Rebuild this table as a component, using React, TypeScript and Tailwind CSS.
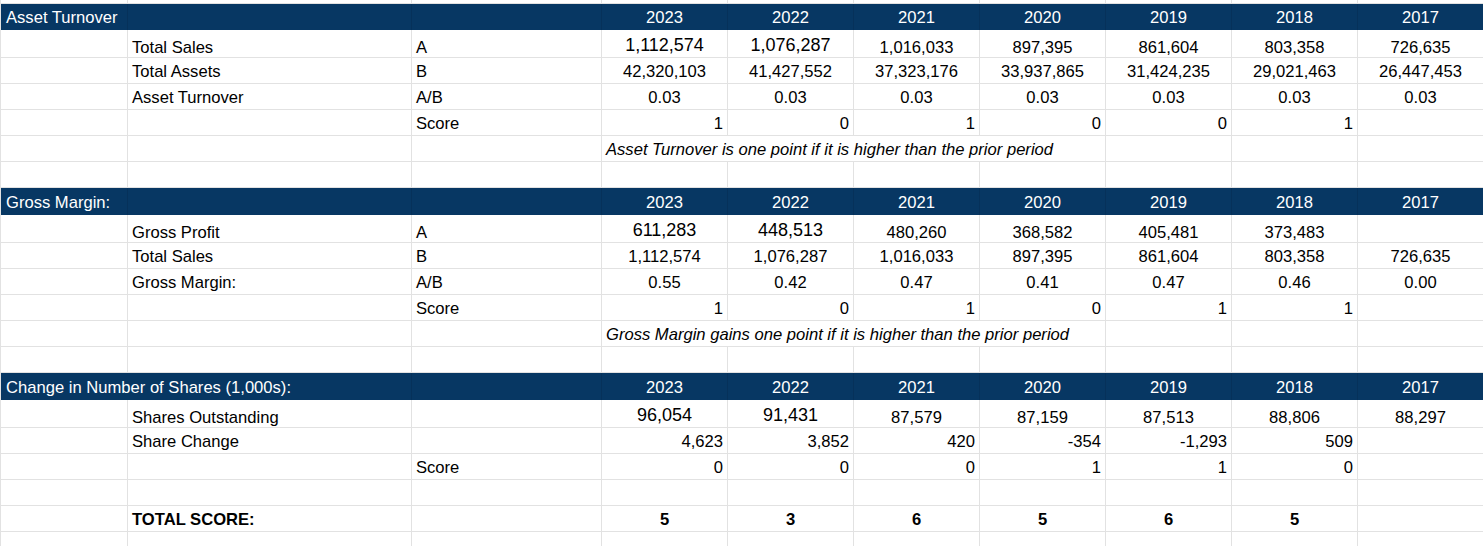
import React from 'react';

type Align = 'left' | 'center' | 'right';

interface Cell {
  text?: string;
  span?: number;
  align?: Align;
  big?: boolean;
  italic?: boolean;
  bold?: boolean;
}

const YEARS = ['2023', '2022', '2021', '2020', '2019', '2018', '2017'];

const GRID = 'grid grid-cols-[127px_284px_190px_repeat(7,126px)]';

const alignClass: Record<Align, string> = {
  left: 'justify-start',
  center: 'justify-center',
  right: 'justify-end',
};

const SpanClass: Record<number, string> = {
  1: 'col-span-1',
  2: 'col-span-2',
  3: 'col-span-3',
  4: 'col-span-4',
};

// header band with navy fill
const HeaderRow: React.FC<{ label: string; span?: number; h: string }> = ({ label, span = 1, h }) => {
  const blanks = 3 - span;
  return (
    <div className={`${GRID} ${h} bg-[#073763] text-white`}>
      <div className={`${SpanClass[span]} flex items-center pt-[2px] pl-[5px] pr-[4px] border-r border-[#06315a] whitespace-nowrap`}>
        {label}
      </div>
      {Array.from({ length: blanks }).map((_, i) => (
        <div key={i} className="border-r border-[#06315a]" />
      ))}
      {YEARS.map((y) => (
        <div key={y} className="flex items-center justify-center pt-[2px] border-r border-[#06315a]">
          {y}
        </div>
      ))}
    </div>
  );
};

// plain grid row; first = the taller row right after a header
const Row: React.FC<{ cells: Cell[]; h?: string; first?: boolean }> = ({ cells, h = 'h-[26px]', first }) => {
  const filled: Cell[] = [...cells];
  let used = filled.reduce((n, c) => n + (c.span ?? 1), 0);
  while (used < 10) {
    filled.push({});
    used++;
  }
  return (
    <div className={`${GRID} ${h} border-b border-[#e2e2e2]`}>
      {filled.map((c, i) => {
        const vert = first
          ? c.big
            ? 'items-center pt-[3px]'
            : 'items-end pb-0'
          : 'items-center pt-[3px]';
        return (
          <div
            key={i}
            className={`${SpanClass[c.span ?? 1]} flex ${vert} ${alignClass[c.align ?? 'left']} px-[4px] border-r border-[#e2e2e2] whitespace-nowrap ${
              c.big ? 'text-[18px] leading-[20px]' : ''
            } ${c.italic ? 'italic' : ''} ${c.bold ? 'font-bold' : ''}`}
          >
            {c.text}
          </div>
        );
      })}
    </div>
  );
};

const centered = (vals: string[], bigCount = 0): Cell[] =>
  vals.map((v, i) => ({ text: v, align: 'center', big: i < bigCount }));

const right = (vals: string[]): Cell[] => vals.map((v) => ({ text: v, align: 'right' }));

export default function App() {
  return (
    <div className="w-[1483px] h-[546px] overflow-hidden bg-white text-black text-[16.6px] leading-[18px] font-[Liberation_Sans,Arial,sans-serif]">
      <div className="border-l border-[#e2e2e2]">
        <Row cells={[]} h="h-[4px]" />

        {/* Asset turnover */}
        <HeaderRow label="Asset Turnover" h="h-[26px]" />
        <Row
          first
          h="h-[28px]"
          cells={[
            {},
            { text: 'Total Sales' },
            { text: 'A' },
            ...centered(['1,112,574', '1,076,287', '1,016,033', '897,395', '861,604', '803,358', '726,635'], 2),
          ]}
        />
        <Row
          cells={[
            {},
            { text: 'Total Assets' },
            { text: 'B' },
            ...centered(['42,320,103', '41,427,552', '37,323,176', '33,937,865', '31,424,235', '29,021,463', '26,447,453']),
          ]}
        />
        <Row
          cells={[{}, { text: 'Asset Turnover' }, { text: 'A/B' }, ...centered(['0.03', '0.03', '0.03', '0.03', '0.03', '0.03', '0.03'])]}
        />
        <Row cells={[{}, {}, { text: 'Score' }, ...right(['1', '0', '1', '0', '0', '1'])]} />
        <Row
          cells={[
            {},
            {},
            {},
            { text: 'Asset Turnover is one point if it is higher than the prior period', span: 4, italic: true },
          ]}
        />
        <Row cells={[]} />

        {/* Gross margin */}
        <HeaderRow label="Gross Margin:" h="h-[27px]" />
        <Row
          first
          h="h-[28px]"
          cells={[
            {},
            { text: 'Gross Profit' },
            { text: 'A' },
            ...centered(['611,283', '448,513', '480,260', '368,582', '405,481', '373,483', ''], 2),
          ]}
        />
        <Row
          cells={[
            {},
            { text: 'Total Sales' },
            { text: 'B' },
            ...centered(['1,112,574', '1,076,287', '1,016,033', '897,395', '861,604', '803,358', '726,635']),
          ]}
        />
        <Row
          cells={[{}, { text: 'Gross Margin:' }, { text: 'A/B' }, ...centered(['0.55', '0.42', '0.47', '0.41', '0.47', '0.46', '0.00'])]}
        />
        <Row cells={[{}, {}, { text: 'Score' }, ...right(['1', '0', '1', '0', '1', '1'])]} />
        <Row
          cells={[
            {},
            {},
            {},
            { text: 'Gross Margin gains one point if it is higher than the prior period', span: 4, italic: true },
          ]}
        />
        <Row cells={[]} />

        {/* Share count */}
        <HeaderRow label="Change in Number of Shares (1,000s):" span={2} h="h-[27px]" />
        <Row
          first
          h="h-[28px]"
          cells={[
            {},
            { text: 'Shares Outstanding' },
            {},
            ...centered(['96,054', '91,431', '87,579', '87,159', '87,513', '88,806', '88,297'], 2),
          ]}
        />
        <Row cells={[{}, { text: 'Share Change' }, {}, ...right(['4,623', '3,852', '420', '-354', '-1,293', '509'])]} />
        <Row cells={[{}, {}, { text: 'Score' }, ...right(['0', '0', '0', '1', '1', '0'])]} />
        <Row cells={[]} />
        <Row
          cells={[
            {},
            { text: 'TOTAL SCORE:', bold: true },
            {},
            ...['5', '3', '6', '5', '6', '5'].map((v): Cell => ({ text: v, align: 'center', bold: true })),
          ]}
        />
        <Row cells={[]} />
      </div>
    </div>
  );
}
